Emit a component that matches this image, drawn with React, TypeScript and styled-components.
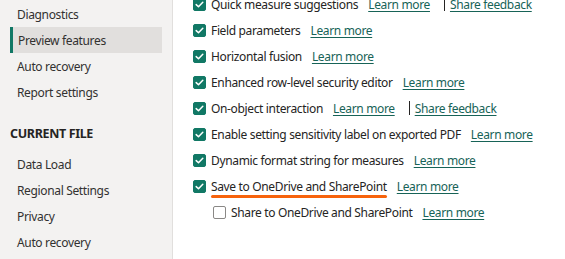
import styled, { createGlobalStyle } from "styled-components";

const GlobalStyle = createGlobalStyle`
  html, body {
    margin: 0;
    padding: 0;
    background: #ffffff;
    overflow: hidden;
  }
  body {
    font-family: "Segoe UI", "Noto Sans", "Open Sans", sans-serif;
    font-size: 12px;
    letter-spacing: -0.35px;
    color: #252423;
  }
`;

const Page = styled.div`
  display: flex;
  width: 565px;
  height: 259px;
  overflow: hidden;
`;

const Sidebar = styled.nav`
  width: 172px;
  flex-shrink: 0;
  background: #f3f2f1;
  border-right: 1px solid #e1dfdd;
  padding-top: 1px;
`;

const NavItem = styled.div<{ active?: boolean }>`
  height: 26px;
  margin: 0 10px;
  padding-left: ${(p) => (p.active ? "5px" : "7px")};
  display: flex;
  align-items: center;
  background: ${(p) => (p.active ? "#e1dfdd" : "transparent")};
  border-left: ${(p) => (p.active ? "3px solid #117865" : "none")};
  color: #323130;
`;

const SectionTitle = styled.div`
  height: 46px;
  box-sizing: border-box;
  padding: 0 0 9px 10px;
  display: flex;
  align-items: flex-end;
  font-weight: 700;
  font-size: 12.5px;
  color: #252423;
`;

const Content = styled.main`
  flex: 1;
  padding-left: 20px;
`;

const List = styled.div`
  margin-top: -9px;
  display: flex;
  flex-direction: column;
`;

const Row = styled.div<{ indent?: boolean }>`
  height: 26px;
  display: flex;
  align-items: center;
  padding-left: ${(p) => (p.indent ? "20px" : "0")};
  white-space: nowrap;
`;

const Box = styled.span<{ checked?: boolean }>`
  width: 13px;
  height: 13px;
  box-sizing: border-box;
  border-radius: 2px;
  flex-shrink: 0;
  display: flex;
  align-items: center;
  justify-content: center;
  background: ${(p) => (p.checked ? "#117865" : "#ffffff")};
  border: 1px solid ${(p) => (p.checked ? "#117865" : "#8a8886")};
  margin-right: 5px;
`;

const Label = styled.span<{ marked?: boolean }>`
  position: relative;
  color: #252423;
  ${(p) =>
    p.marked &&
    `
    &::after {
      content: "";
      position: absolute;
      left: 0;
      right: 0;
      bottom: -3px;
      height: 3px;
      border-radius: 2px;
      background: #f7630c;
    }
  `}
`;

const Link = styled.a`
  color: #176357;
  text-decoration: underline;
  text-underline-offset: 2px;
  margin-left: 10px;
  cursor: pointer;
`;

const Divider = styled.span`
  width: 1px;
  height: 14px;
  background: #252423;
  margin: 0 5px 0 14px;
`;

const FeedbackLink = styled(Link)`
  margin-left: 0;
`;

const Check = () => (
  <svg width="9" height="9" viewBox="0 0 9 9" fill="none">
    <path d="M1.2 4.6 L3.5 6.8 L7.8 2.2" stroke="#ffffff" strokeWidth="1.5" strokeLinecap="round" strokeLinejoin="round" />
  </svg>
);

interface Feature {
  label: string;
  checked: boolean;
  feedback?: boolean;
  indent?: boolean;
  marked?: boolean;
}

const features: Feature[] = [
  { label: "Quick measure suggestions", checked: true, feedback: true },
  { label: "Field parameters", checked: true },
  { label: "Horizontal fusion", checked: true },
  { label: "Enhanced row-level security editor", checked: true },
  { label: "On-object interaction", checked: true, feedback: true },
  { label: "Enable setting sensitivity label on exported PDF", checked: true },
  { label: "Dynamic format string for measures", checked: true },
  { label: "Save to OneDrive and SharePoint", checked: true, marked: true },
  { label: "Share to OneDrive and SharePoint", checked: false, indent: true },
];

const globalItems = ["Diagnostics", "Preview features", "Auto recovery", "Report settings"];
const fileItems = ["Data Load", "Regional Settings", "Privacy", "Auto recovery"];

function App() {
  return (
    <>
      <GlobalStyle />
      <Page>
        <Sidebar>
          {globalItems.map((item) => (
            <NavItem key={item} active={item === "Preview features"}>
              {item}
            </NavItem>
          ))}
          <SectionTitle>CURRENT FILE</SectionTitle>
          {fileItems.map((item) => (
            <NavItem key={item}>{item}</NavItem>
          ))}
        </Sidebar>
        <Content>
          <List>
            {features.map((f) => (
              <Row key={f.label} indent={f.indent}>
                <Box checked={f.checked}>{f.checked && <Check />}</Box>
                <Label marked={f.marked}>{f.label}</Label>
                <Link>Learn more</Link>
                {f.feedback && (
                  <>
                    <Divider />
                    <FeedbackLink>Share feedback</FeedbackLink>
                  </>
                )}
              </Row>
            ))}
          </List>
        </Content>
      </Page>
    </>
  );
}

export default App;
